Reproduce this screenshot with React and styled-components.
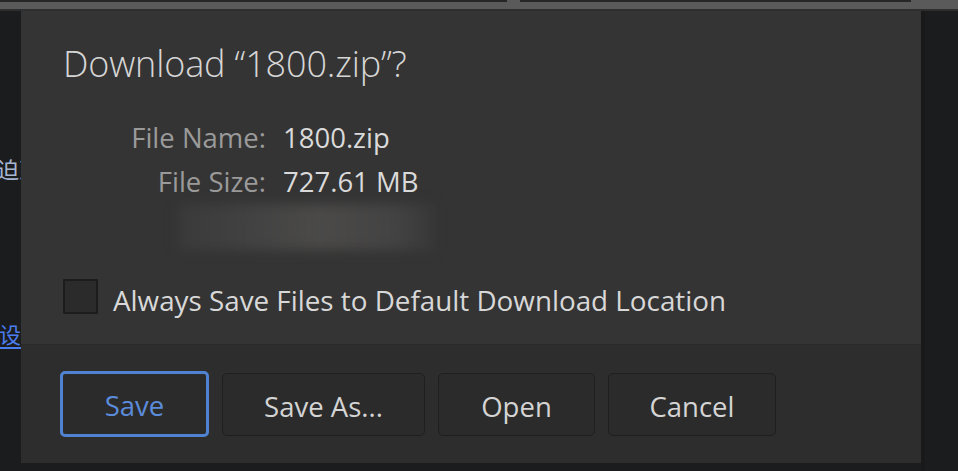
import React from 'react'
import styled, { createGlobalStyle } from 'styled-components'

const GlobalStyle = createGlobalStyle`
    html, body {
        margin: 0;
        padding: 0;
        background: #1b1c1e;
        overflow: hidden;
    }
    body {
        font-family: 'Open Sans', 'Noto Sans', sans-serif;
    }
`

const Page = styled.div`
    width: 958px;
    height: 471px;
    display: flex;
    flex-direction: column;
    background: #1b1c1e;
`

const TopBar = styled.div`
    height: 11px;
    flex: none;
    display: flex;
    flex-direction: column;
`

const TabStrip = styled.div`
    height: 2px;
    display: flex;
    background: #5a5a5a;
`

const Tab = styled.div`
    height: 2px;
    width: ${(p) => p.$w}px;
    margin-left: ${(p) => p.$gap || 0}px;
    background: #262627;
`

const Band = styled.div`
    height: 7px;
    background: #5a5a5a;
`

const Seam = styled.div`
    height: 2px;
    background: #2e2e2e;
`

const Body = styled.div`
    flex: 1;
    display: flex;
    min-height: 0;
`

const Gutter = styled.div`
    width: 21px;
    flex: none;
    overflow: hidden;
    display: flex;
    flex-direction: column;
    font-family: 'Noto Sans CJK SC', sans-serif;
    font-size: 22px;
    line-height: 30px;
`

const GutterLine = styled.div`
    white-space: nowrap;
    margin-left: ${(p) => p.$shift}px;
    margin-top: ${(p) => p.$top}px;
    color: ${(p) => (p.$link ? '#4a7ef0' : '#a6b6d2')};
    text-decoration: ${(p) => (p.$link ? 'underline' : 'none')};
    text-underline-offset: 4px;
`

const Dialog = styled.div`
    width: 900px;
    height: 452px;
    flex: none;
    display: flex;
    flex-direction: column;
    background: #343434;
`

const Content = styled.div`
    flex: 1;
    padding: 0 0 0 42px;
    display: flex;
    flex-direction: column;
`

const Title = styled.h1`
    margin: 31px 0 0;
    font-size: 36px;
    font-weight: 300;
    line-height: 44px;
    color: #d6d6d6;
    letter-spacing: -0.15px;
`

const InfoGrid = styled.div`
    margin-top: 30px;
    display: grid;
    grid-template-columns: 203px auto;
    column-gap: 17px;
    font-size: 27.5px;
    line-height: 44px;
`

const Label = styled.div`
    text-align: right;
    color: #9a9a9a;
`

const Value = styled.div`
    color: #dadada;
`

const Redacted = styled.div`
    margin: 0 0 0 115px;
    width: 256px;
    height: 46px;
    background: linear-gradient(90deg, #3a3a3a 0%, #414141 25%, #4b4a49 55%, #444343 85%, #383838 100%);
    filter: blur(6px);
`

const CheckRow = styled.label`
    margin-top: 27px;
    height: 38px;
    display: flex;
    align-items: center;
    gap: 15px;
    font-size: 27.8px;
    line-height: 38px;
    color: #d8d8d8;
`

const CheckText = styled.span`
    padding-top: 7px;
`

const CheckBox = styled.span`
    width: 31px;
    height: 31px;
    flex: none;
    border: 2px solid #1c1c1c;
    background: #2b2b2b;
    border-radius: 1px;
`

const Footer = styled.div`
    height: 119px;
    flex: none;
    background: #2d2d2d;
    border-top: 1px solid #2a2a2a;
    box-sizing: border-box;
    padding: 26px 0 0 39px;
    display: flex;
    align-items: flex-start;
    gap: 13px;
`

const Button = styled.button`
    width: ${(p) => p.$w}px;
    height: ${(p) => (p.$primary ? 66 : 63)}px;
    margin-top: ${(p) => (p.$primary ? 0 : 2)}px;
    padding: 3px 0 0;
    font-family: 'Open Sans', 'Noto Sans', sans-serif;
    font-size: 27.5px;
    color: ${(p) => (p.$primary ? '#5b8cdc' : '#d4d4d4')};
    background: #2b2b2b;
    border: ${(p) => (p.$primary ? '3px solid #4f83d1' : '1px solid #1f1f1f')};
    border-radius: 5px;
    box-sizing: border-box;
    cursor: default;
`

const RightGutter = styled.div`
    flex: 1;
    background: #1b1c1e;
    border-left: 4px solid #19191a;
`

export default function App() {
    return (
        <Page>
            <GlobalStyle />
            <TopBar>
                <TabStrip>
                    <Tab $w={507} />
                    <Tab $w={391} $gap={13} />
                </TabStrip>
                <Band />
                <Seam />
            </TopBar>
            <Body>
                <Gutter>
                    <GutterLine $shift={-3} $top={142}>迫到</GutterLine>
                    <GutterLine $shift={-1} $top={135} $link>设置</GutterLine>
                </Gutter>
                <Dialog>
                    <Content>
                        <Title>Download “1800.zip”?</Title>
                        <InfoGrid>
                            <Label>File Name:</Label>
                            <Value>1800.zip</Value>
                            <Label>File Size:</Label>
                            <Value>727.61 MB</Value>
                        </InfoGrid>
                        <Redacted />
                        <CheckRow>
                            <CheckBox />
                            <CheckText>Always Save Files to Default Download Location</CheckText>
                        </CheckRow>
                    </Content>
                    <Footer>
                        <Button $primary $w={149}>Save</Button>
                        <Button $w={203}>Save As...</Button>
                        <Button $w={157}>Open</Button>
                        <Button $w={168}>Cancel</Button>
                    </Footer>
                </Dialog>
                <RightGutter />
            </Body>
        </Page>
    )
}
